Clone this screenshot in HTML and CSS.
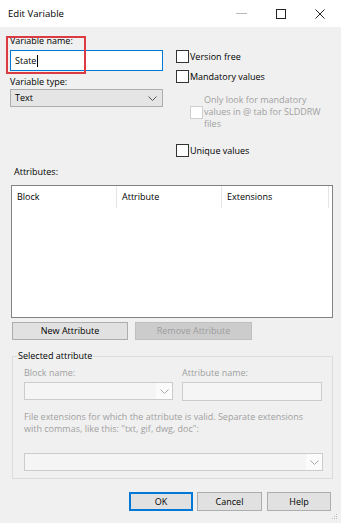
FILE: index.html
```html
<!DOCTYPE html>
<html lang="en">
<head>
  <meta charset="UTF-8" />
  <meta name="viewport" content="width=device-width, initial-scale=1" />
  <title>Edit Variable</title>
  <link rel="stylesheet" href="styles.css">
</head>
<body>
  <div class="dialog">
    <div class="titlebar">
      <span class="title">Edit Variable</span>
      <div class="controls">
        <span class="ctl"><svg width="11" height="1" viewBox="0 0 11 1"><line x1="0" y1="0.5" x2="11" y2="0.5" stroke="#b8b8b8" /></svg></span>
        <span class="ctl"><svg width="10" height="10" viewBox="0 0 10 10"><rect x="0.5" y="0.5" width="9" height="9" fill="none" stroke="#222" /></svg></span>
        <span class="ctl"><svg width="10" height="10" viewBox="0 0 10 10"><path d="M0.5 0.5 L9.5 9.5 M9.5 0.5 L0.5 9.5" stroke="#222" /></svg></span>
      </div>
    </div>

    <div class="top">
      <div class="left-col">
        <label class="lbl">Variable name:</label>
        <div class="textbox focused">State<span class="caret"></span></div>
        <label class="lbl lbl-type">Variable type:</label>
        <div class="combo">
          <span>Text</span>
          <svg class="chev" width="9" height="5" viewBox="0 0 9 5"><polyline points="0.5,0.5 4.5,4.5 8.5,0.5" fill="none" stroke="#555" /></svg>
        </div>
      </div>
      <div class="right-col">
        <div class="check"><span class="box"></span><span>Version free</span></div>
        <div class="check"><span class="box"></span><span>Mandatory values</span></div>
        <div class="sub">
          <span class="box off"></span>
          <span class="sub-text">Only look for mandatory<br>values in @ tab for SLDDRW<br>files</span>
        </div>
        <div class="check unique"><span class="box"></span><span>Unique values</span></div>
      </div>
    </div>

    <div class="attr-label">Attributes:</div>
    <div class="list">
      <div class="list-head">
        <div class="col">Block</div>
        <div class="col">Attribute</div>
        <div class="col wide-col">Extensions</div>
      </div>
    </div>

    <div class="actions">
      <div class="btn btn-new">New Attribute</div>
      <div class="btn btn-remove off">Remove Attribute</div>
    </div>

    <fieldset class="group">
      <legend>Selected attribute</legend>
      <div class="pair">
        <div>
          <div class="lbl dim">Block name:</div>
          <div class="combo off">
            <span></span>
            <span class="drop"><svg width="9" height="5" viewBox="0 0 9 5"><polyline points="0.5,0.5 4.5,4.5 8.5,0.5" fill="none" stroke="#a8a8a8" /></svg></span>
          </div>
        </div>
        <div>
          <div class="lbl dim">Attribute name:</div>
          <div class="textbox off"></div>
        </div>
      </div>
      <p class="note dim">File extensions for which the attribute is valid. Separate extensions<br>with commas, like this: "txt, gif, dwg, doc":</p>
      <div class="combo off combo-wide">
        <span></span>
        <span class="drop"><svg width="9" height="5" viewBox="0 0 9 5"><polyline points="0.5,0.5 4.5,4.5 8.5,0.5" fill="none" stroke="#a8a8a8" /></svg></span>
      </div>
    </fieldset>

    <div class="footer">
      <div class="btn btn-ok">OK</div>
      <div class="btn btn-cancel">Cancel</div>
      <div class="btn btn-help">Help</div>
    </div>

    <div class="highlight"></div>
    <svg class="grip" width="7" height="7" viewBox="0 0 7 7">
      <rect x="5" y="1" width="1" height="1" fill="#bbb" />
      <rect x="3" y="3" width="1" height="1" fill="#bbb" />
      <rect x="5" y="3" width="1" height="1" fill="#bbb" />
      <rect x="1" y="5" width="1" height="1" fill="#bbb" />
      <rect x="3" y="5" width="1" height="1" fill="#bbb" />
      <rect x="5" y="5" width="1" height="1" fill="#bbb" />
    </svg>
  </div>
</body>
</html>
```

FILE: styles.css
```css
* { margin: 0; padding: 0; box-sizing: border-box; }
body {
  font-family: "Open Sans", "Noto Sans", sans-serif;
  font-size: 9px;
  line-height: 12px;
  color: #000;
  background: #f0f0f0;
}
.dialog {
  position: relative;
  width: 341px;
  height: 523px;
  background: #f0f0f0;
}
.titlebar {
  height: 27px;
  background: #fff;
  display: flex;
  align-items: center;
  justify-content: space-between;
  padding-left: 8px;
}
.title {
  font-size: 9.6px;
  color: #000;
}
.controls {
  display: flex;
  height: 100%;
  padding-right: 2px;
}
.ctl {
  width: 39px;
  display: flex;
  align-items: center;
  justify-content: center;
}
.ctl svg { display: block; }

.top {
  display: flex;
  padding-left: 10px;
}
.left-col {
  width: 153px;
  padding-top: 8px;
}
.lbl {
  display: block;
  height: 12px;
}
.lbl-type { margin-top: 5px; }
.textbox {
  margin-top: 3px;
  height: 21px;
  border: 1px solid #7a7a7a;
  background: #fff;
  padding-left: 4px;
  display: flex;
  align-items: center;
}
.textbox.focused { border-color: #0078d7; }
.caret {
  width: 1px;
  height: 12px;
  background: #000;
  margin-left: 1px;
}
.combo {
  margin-top: 1px;
  height: 18px;
  border: 1px solid #adadad;
  background: #e5e5e5;
  display: flex;
  align-items: center;
  justify-content: space-between;
  padding: 0 5px 0 4px;
}
.chev { display: block; }

.right-col {
  margin-left: 13px;
  padding-top: 23px;
}
.check {
  display: flex;
  align-items: center;
  gap: 1px;
  height: 13px;
}
.check + .check { margin-top: 7px; }
.box {
  width: 13px;
  height: 13px;
  border: 1px solid #333;
  background: #fff;
  flex-shrink: 0;
}
.box.off { border-color: #cfcfcf; }
.sub {
  display: flex;
  align-items: center;
  margin: 11px 0 0 14px;
}
.sub-text {
  margin-left: 1px;
  color: #a0a0a0;
}
.check.unique { margin-top: 14px; }

.attr-label {
  margin: 9px 0 0 14px;
  height: 12px;
}
.list {
  margin: 7px 8px 0 11px;
  height: 133px;
  border: 1px solid #828282;
  background: #fff;
}
.list-head {
  display: flex;
  height: 22px;
}
.col {
  width: 105px;
  border-right: 1px solid #e5e5e5;
  padding-left: 5px;
  display: flex;
  align-items: center;
}
.col.wide-col { width: 107px; }

.actions {
  display: flex;
  gap: 7px;
  margin: 4px 0 0 12px;
}
.btn {
  height: 18px;
  border: 1px solid #adadad;
  background: #e1e1e1;
  display: flex;
  align-items: center;
  justify-content: center;
}
.btn-new { width: 116px; }
.btn-remove { width: 117px; }
.btn.off {
  background: #cccccc;
  border-color: #bfbfbf;
  color: #9c9c9c;
}

.group {
  margin: 10px 8px 0 12px;
  border: 1px solid #dcdcdc;
  padding: 5px 10px 7px 11px;
  min-width: 0;
}
.group legend {
  margin-left: -7px;
  padding: 0 1px;
  line-height: 12px;
}
.pair {
  display: grid;
  grid-template-columns: 149px 140px;
  column-gap: 9px;
}
.dim { color: #a0a0a0; }
.combo.off {
  margin-top: 3px;
  border-color: #cccccc;
  background: #f5f5f5;
  padding: 0;
}
.drop {
  width: 16px;
  height: 100%;
  background: #fbfbfb;
  display: flex;
  align-items: center;
  justify-content: center;
}
.drop svg { display: block; }
.textbox.off {
  height: 19px;
  border-color: #cccccc;
  background: #f5f5f5;
}
.note {
  margin-top: 10px;
  line-height: 11.5px;
  white-space: nowrap;
}
.combo.combo-wide {
  margin-top: 19px;
  width: 299px;
}

.footer {
  display: flex;
  justify-content: flex-end;
  margin-top: 13px;
  padding-right: 10px;
}
.footer .btn { height: 19px; }
.btn-ok {
  width: 64px;
  border-color: #0078d7;
  box-shadow: inset 0 0 0 1px #0078d7;
}
.btn-cancel { width: 65px; margin-left: 4px; }
.btn-help { width: 64px; margin-left: 5px; }

.highlight {
  position: absolute;
  left: 6px;
  top: 36px;
  width: 80px;
  height: 38px;
  border: 2px solid #dc3b41;
}
.grip {
  position: absolute;
  right: 3px;
  bottom: 3px;
}
```
